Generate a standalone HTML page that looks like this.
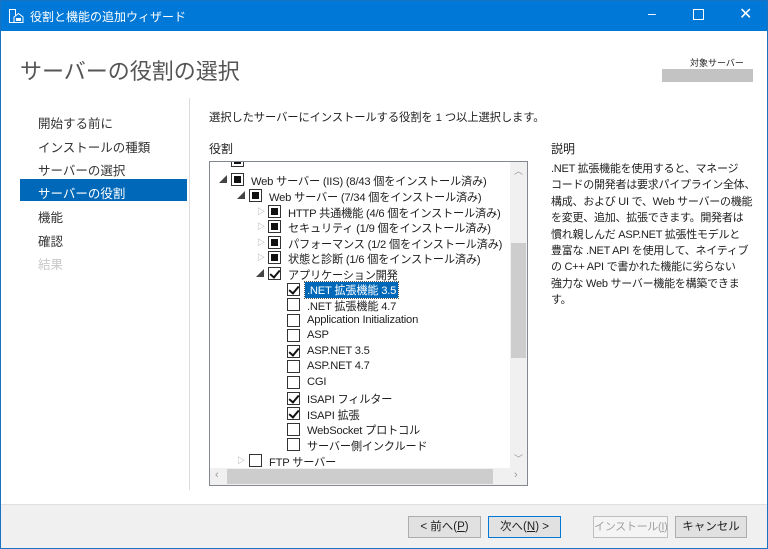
<!DOCTYPE html>
<html><head><meta charset="utf-8"><style>
*{margin:0;padding:0;box-sizing:border-box}
body{width:768px;height:549px;overflow:hidden;background:#fff;font-family:"Liberation Sans","Noto Sans CJK JP",sans-serif;font-size:12px;color:#1e1e1e;position:relative}
.a{position:absolute;white-space:nowrap}
.win{position:absolute;left:0;top:0;width:768px;height:549px;border:1px solid #1a73c2}
.tb{position:absolute;left:0;top:0;width:768px;height:31px;background:#0078d7;color:#fff}
.nav{position:absolute;left:38px;font-size:12.5px;color:#333}
.cb{position:absolute;width:13px;height:13px;border:1px solid #333;background:#fff}
.cb.f::after{content:"";position:absolute;left:2px;top:2px;width:7px;height:7px;background:#111}
.cb.c::after{content:"";position:absolute;left:3px;top:0px;width:4px;height:8px;border:solid #111;border-width:0 2px 2px 0;transform:rotate(40deg)}
.ar{position:absolute;font-size:8px;color:#444}
.ar.o{color:#999}
.t{position:absolute;font-size:11.2px;white-space:nowrap;color:#1e1e1e;letter-spacing:-0.2px;margin-top:1px}
.btn{position:absolute;top:516px;height:22px;border:1px solid #adadad;background:#e1e1e1;font-size:11.5px;text-align:center;line-height:20px;white-space:nowrap;overflow:hidden}
.d{position:absolute;left:551px;font-size:11px;white-space:nowrap;letter-spacing:-0.25px}
</style></head><body>
<div class="tb">
 <svg class="a" style="left:8px;top:8px" width="16" height="16" viewBox="0 0 16 16"><rect x="1.5" y="1.5" width="6" height="13" fill="none" stroke="#fff"/><path d="M6 9 L10.5 5.5 L15 9 V14.5 H6Z" fill="#0078d7" stroke="#fff"/><rect x="8" y="10" width="5" height="3" fill="#fff"/></svg>
 <span class="a" style="left:30px;top:8px;font-size:12px">役割と機能の追加ウィザード</span>
 <span class="a" style="left:648px;top:5px;font-size:14px">–</span>
 <span class="a" style="left:693px;top:9px;width:11px;height:11px;border:1px solid #fff"></span>
 <span class="a" style="left:739px;top:4px;font-size:16px">✕</span>
</div>
<div class="win"></div>
<span class="a" style="left:20px;top:54px;font-size:22px;color:#555">サーバーの役割の選択</span>
<span class="a" style="left:690px;top:56px;font-size:9px">対象サーバー</span>
<div class="a" style="left:662px;top:69px;width:91px;height:13px;background:#c3c3c3"></div>

<div class="a" style="left:20px;top:179px;width:167px;height:22px;background:#0068b8"></div>
<span class="nav" style="top:113px">開始する前に</span>
<span class="nav" style="top:137px">インストールの種類</span>
<span class="nav" style="top:160px">サーバーの選択</span>
<span class="nav" style="top:183px;color:#fff">サーバーの役割</span>
<span class="nav" style="top:207px">機能</span>
<span class="nav" style="top:231px">確認</span>
<span class="nav" style="top:254px;color:#c8c8c8">結果</span>
<div class="a" style="left:189px;top:98px;width:1px;height:392px;background:#dcdcdc"></div>

<span class="a" style="left:209px;top:109px;font-size:11.3px;letter-spacing:-0.1px">選択したサーバーにインストールする役割を 1 つ以上選択します。</span>
<span class="a" style="left:209px;top:140px;font-size:12px">役割</span>
<span class="a" style="left:551px;top:140px;font-size:12px">説明</span>
<span class="d" style="top:160px">.NET 拡張機能を使用すると、マネージ</span>
<span class="d" style="top:176px">コードの開発者は要求パイプライン全体、</span>
<span class="d" style="top:193px">構成、および UI で、Web サーバーの機能</span>
<span class="d" style="top:209px">を変更、追加、拡張できます。開発者は</span>
<span class="d" style="top:226px">慣れ親しんだ ASP.NET 拡張性モデルと</span>
<span class="d" style="top:242px">豊富な .NET API を使用して、ネイティブ</span>
<span class="d" style="top:258px">の C++ API で書かれた機能に劣らない</span>
<span class="d" style="top:275px">強力な Web サーバー機能を構築できま</span>
<span class="d" style="top:291px">す。</span>

<div class="a" style="left:209px;top:161px;width:319px;height:325px;border:1px solid #828790;overflow:hidden;background:#fff">
 <div class="a" style="left:300px;top:0;width:17px;height:306px;background:#f0f0f0"></div>
 <div class="a" style="left:301px;top:81px;width:15px;height:115px;background:#cdcdcd"></div>
 <span class="a" style="left:304px;top:2px;font-size:9px;color:#999">︿</span>
 <span class="a" style="left:304px;top:290px;font-size:9px;color:#999">﹀</span>
 <div class="a" style="left:0;top:306px;width:317px;height:17px;background:#f0f0f0"></div>
 <div class="a" style="left:17px;top:307px;width:266px;height:15px;background:#cdcdcd"></div>
 <span class="a" style="left:5px;top:307px;font-size:11px;color:#999">‹</span>
 <span class="a" style="left:304px;top:307px;font-size:11px;color:#999">›</span>
</div>
<div class="a" style="left:210px;top:162px;width:299px;height:305px;overflow:hidden">
 <div style="position:absolute;left:0;top:0;width:299px;height:305px">
  <div class="cb f" style="left:21px;top:-8px"></div>
  <span class="ar" style="left:9px;top:12px">◢</span><div class="cb f" style="left:21px;top:11px"></div><span class="t" style="left:41px;top:10px">Web サーバー (IIS) (8/43 個をインストール済み)</span>
  <span class="ar" style="left:27px;top:28px">◢</span><div class="cb f" style="left:39px;top:27px"></div><span class="t" style="left:59px;top:26px">Web サーバー (7/34 個をインストール済み)</span>
  <span class="ar o" style="left:47px;top:44px">▷</span><div class="cb f" style="left:58px;top:43px"></div><span class="t" style="left:78px;top:42px">HTTP 共通機能 (4/6 個をインストール済み)</span>
  <span class="ar o" style="left:47px;top:59px">▷</span><div class="cb f" style="left:58px;top:58px"></div><span class="t" style="left:78px;top:57px">セキュリティ (1/9 個をインストール済み)</span>
  <span class="ar o" style="left:47px;top:75px">▷</span><div class="cb f" style="left:58px;top:74px"></div><span class="t" style="left:78px;top:73px">パフォーマンス (1/2 個をインストール済み)</span>
  <span class="ar o" style="left:47px;top:90px">▷</span><div class="cb f" style="left:58px;top:89px"></div><span class="t" style="left:78px;top:88px">状態と診断 (1/6 個をインストール済み)</span>
  <span class="ar" style="left:46px;top:106px">◢</span><div class="cb c" style="left:58px;top:105px"></div><span class="t" style="left:78px;top:104px">アプリケーション開発</span>
  <div class="cb c" style="left:77px;top:121px"></div><span class="t" style="left:95px;top:119px;background:#0068b8;color:#fff;padding:0 2px;outline:1px dotted #555">.NET 拡張機能 3.5</span>
  <div class="cb" style="left:77px;top:136px"></div><span class="t" style="left:97px;top:135px">.NET 拡張機能 4.7</span>
  <div class="cb" style="left:77px;top:152px"></div><span class="t" style="left:97px;top:151px">Application Initialization</span>
  <div class="cb" style="left:77px;top:167px"></div><span class="t" style="left:97px;top:166px">ASP</span>
  <div class="cb c" style="left:77px;top:183px"></div><span class="t" style="left:97px;top:182px">ASP.NET 3.5</span>
  <div class="cb" style="left:77px;top:198px"></div><span class="t" style="left:97px;top:197px">ASP.NET 4.7</span>
  <div class="cb" style="left:77px;top:214px"></div><span class="t" style="left:97px;top:213px">CGI</span>
  <div class="cb c" style="left:77px;top:230px"></div><span class="t" style="left:97px;top:228px">ISAPI フィルター</span>
  <div class="cb c" style="left:77px;top:245px"></div><span class="t" style="left:97px;top:244px">ISAPI 拡張</span>
  <div class="cb" style="left:77px;top:261px"></div><span class="t" style="left:97px;top:259px">WebSocket プロトコル</span>
  <div class="cb" style="left:77px;top:276px"></div><span class="t" style="left:97px;top:275px">サーバー側インクルード</span>
  <span class="ar o" style="left:27px;top:293px">▷</span><div class="cb" style="left:39px;top:292px"></div><span class="t" style="left:59px;top:291px">FTP サーバー</span>
 </div>
</div>

<div class="a" style="left:1px;top:504px;width:766px;height:44px;background:#f0f0f0;border-top:1px solid #dfdfdf"></div>
<div class="btn" style="left:408px;width:73px">&lt; 前へ(<u>P</u>)</div>
<div class="btn" style="left:488px;width:73px;border:1px solid #0078d7">次へ(<u>N</u>) &gt;</div>
<div class="btn" style="left:593px;width:75px;background:#f4f4f4;border-color:#bfbfbf;color:#a0a0a0;font-size:11px;letter-spacing:-0.3px">インストール(<u>I</u>)</div>
<div class="btn" style="left:675px;width:72px">キャンセル</div>
</body></html>
